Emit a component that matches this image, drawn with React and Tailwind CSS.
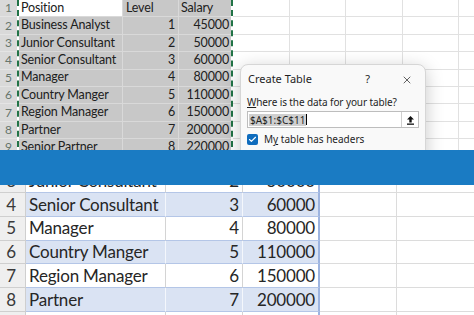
import { Check, X } from "lucide-react";

const rows = [
  ["Position", "Level", "Salary"],
  ["Business Analyst", 1, 45000],
  ["Junior Consultant", 2, 50000],
  ["Senior Consultant", 3, 60000],
  ["Manager", 4, 80000],
  ["Country Manger", 5, 110000],
  ["Region Manager", 6, 150000],
  ["Partner", 7, 200000],
  ["Senior Partner", 8, 220000],
];

const TopSheet = () => {
  return (
    <div className="relative h-[150px] overflow-hidden bg-white">
      <div className="flex">
        {/* row headers */}
        <div className="w-[17px] shrink-0 bg-[#d9d9d9]">
          {rows.map((_, i) => (
            <div
              key={i}
              className="h-[17.4px] flex items-center justify-center border-b border-[#e4e4e4] text-[12px] text-[#66756c]"
            >
              {i + 1}
            </div>
          ))}
        </div>
        {/* selected range with marching ants */}
        <div className="w-[216px] shrink-0 border-x-2 border-dashed border-[#217346]">
          {rows.map((r, i) => (
            <div
              key={i}
              className="flex h-[17.4px] bg-[#c8c8c8] text-[12.5px] tracking-[-0.15px] text-[#202020] whitespace-nowrap"
            >
              <div
                className={`w-[104px] overflow-hidden flex items-center px-[2px] border-r border-b border-[#d9d9d9] ${
                  i === 0 ? "bg-white" : ""
                }`}
              >
                {r[0]}
              </div>
              <div
                className={`w-[56px] flex items-center px-[3px] border-r border-b border-[#d9d9d9] ${
                  i === 0 ? "justify-start" : "justify-end"
                }`}
              >
                {r[1]}
              </div>
              <div
                className={`flex-1 flex items-center px-[2px] border-b border-[#d9d9d9] ${
                  i === 0 ? "justify-start" : "justify-end"
                }`}
              >
                {r[2]}
              </div>
            </div>
          ))}
        </div>
        {/* empty columns */}
        <div className="flex-1">
          {rows.map((_, i) => (
            <div key={i} className="flex h-[17.4px]">
              <div className="w-[57px] shrink-0 border-r border-b border-[#e1e1e1]" />
              <div className="w-[56px] shrink-0 border-r border-b border-[#e1e1e1]" />
              <div className="w-[57px] shrink-0 border-r border-b border-[#e1e1e1]" />
              <div className="w-[56px] shrink-0 border-r border-b border-[#e1e1e1]" />
              <div className="flex-1 border-b border-[#e1e1e1]" />
            </div>
          ))}
        </div>
      </div>

      {/* Create Table dialog */}
      <div className="absolute left-[240px] top-[64px] w-[186px] h-[110px] rounded-lg border border-[#d6d6d6] bg-[#f9f9f9] shadow-[0_4px_18px_rgba(0,0,0,0.22)] font-['Noto_Sans',sans-serif] text-[#1f1f1f]">
        <div className="flex items-center h-[26px] pl-[7px] pr-[12px] pt-[3px]">
          <span className="text-[11px]">Create Table</span>
          <span className="ml-auto mr-[31px] text-[11px]">?</span>
          <X size={12} strokeWidth={1.4} />
        </div>
        <div className="px-[6px] pt-[5px]">
          <div className="text-[10px] leading-[13px] tracking-[-0.1px]">
            <span className="underline">W</span>here is the data for your table?
          </div>
          <div className="mt-[2px] flex h-[17px] border border-[#bdbdbd] bg-white">
            <div className="flex-1 flex items-center pl-[1px]">
              <span className="text-[10px] bg-[#cfcfcf] leading-[12px] px-[1px]">$A$1:$C$11</span>
              <span className="w-px h-[11px] bg-black" />
            </div>
            <div className="w-[17px] flex items-center justify-center border-l border-[#cfcfcf]">
              <svg width="9" height="10" viewBox="0 0 9 10">
                <path d="M4.5 1 L1 4.5 H3.3 V7.5 H5.7 V4.5 H8 Z" fill="#111" />
                <rect x="1" y="8.5" width="7" height="1.3" fill="#111" />
              </svg>
            </div>
          </div>
          <div className="mt-[4px] flex items-center gap-[6px]">
            <div className="w-[11px] h-[11px] rounded-[2px] bg-[#0f6cbd] flex items-center justify-center">
              <Check size={9} strokeWidth={3} color="white" />
            </div>
            <span className="text-[10px]">
              M<span className="underline">y</span> table has headers
            </span>
          </div>
          <div className="mt-[5px] ml-[37px] w-[60px] h-[8px] rounded-t border border-[#cfcfcf] bg-white" />
        </div>
      </div>
    </div>
  );
};

const BottomSheet = () => {
  const bigRows = rows.slice(2);
  return (
    <div className="h-[130px] overflow-hidden bg-white">
      <div className="mt-[-15.8px]">
        {bigRows.map((r, idx) => {
          const n = idx + 3;
          const banded = n % 2 === 0;
          const fill = banded ? "bg-[#dae3f3]" : "bg-white";
          const vline = banded ? "border-r-[#f4f7fc]" : "border-r-[#d4d4d4]";
          return (
            <div
              key={n}
              className="flex h-[23.8px] text-[17px] tracking-[-0.2px] text-[#262626] whitespace-nowrap"
            >
              <div className="w-[26px] shrink-0 flex items-center justify-center pr-[3px] bg-[#efefef] border-r border-b border-[#cfcfcf] text-[17px] text-[#3a3a3a]">
                {n}
              </div>
              <div
                className={`w-[140px] shrink-0 overflow-hidden flex items-center pl-[3px] border-r border-b border-b-[#b4c6e7] ${vline} ${fill}`}
              >
                {r[0]}
              </div>
              <div
                className={`w-[77px] shrink-0 flex items-center justify-end pr-[3px] border-r border-b border-b-[#b4c6e7] ${vline} ${fill}`}
              >
                {r[1]}
              </div>
              <div
                className={`w-[77px] shrink-0 flex items-center justify-end pr-[3px] border-r-2 border-b border-b-[#b4c6e7] border-r-[#9db4e0] ${fill}`}
              >
                {r[2]}
              </div>
              <div className="w-[77px] shrink-0 border-r border-b border-[#dcdcdc]" />
              <div className="flex-1 border-b border-[#dcdcdc]" />
            </div>
          );
        })}
      </div>
    </div>
  );
}

export default function App() {
  return (
    <div className="w-[474px] h-[315px] overflow-hidden bg-white font-['Lato',sans-serif]">
      <TopSheet />
      <div className="h-[35px] bg-[#1a7bc3]" />
      <BottomSheet />
    </div>
  );
}
